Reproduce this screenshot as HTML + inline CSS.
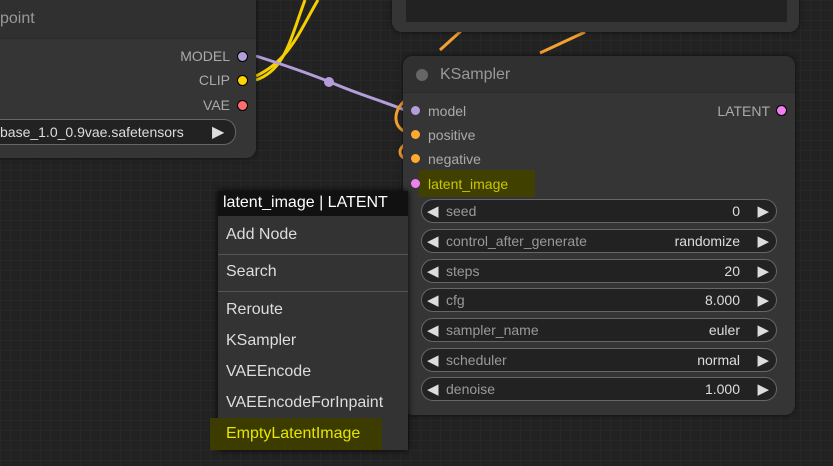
<!DOCTYPE html>
<html><head><style>
body{margin:0;width:833px;height:466px;overflow:hidden;background:#222;font-family:"Liberation Sans",sans-serif;position:relative;
background-image:linear-gradient(#282828 1px,transparent 1px),linear-gradient(90deg,#282828 1px,transparent 1px);background-size:10px 10px}
.node{position:absolute;background:#353535;border-radius:10px;box-shadow:0 0 6px rgba(0,0,0,.6)}
.title{position:absolute;left:0;right:0;top:0;height:36px;background:#303030;border-bottom:1px solid #2a2a2a;border-radius:10px 10px 0 0}
.t{position:absolute;font-size:14px;color:#aaa;white-space:nowrap}
.dot{position:absolute;width:9px;height:9px;border-radius:50%}
.w{position:absolute;left:18px;width:354px;height:22px;border:1px solid #666;border-radius:12px;background:#222;font-size:14px;color:#999}
.w .l{position:absolute;left:5px;top:2px;color:#ddd;font-size:15px}
.w .r{position:absolute;right:7px;top:2px;color:#ddd;font-size:15px}
.w .n{position:absolute;left:24px;top:3px}
.w .v{position:absolute;right:36px;top:3px;color:#ddd}
.menu{position:absolute;left:218px;top:191px;width:190px;height:259px;background:#333;box-shadow:0 0 6px #000}
.mi{position:absolute;left:8px;font-size:16px;color:#ddd}
.sep{position:absolute;left:0;right:0;height:1px;background:#555}
</style></head><body>
<svg style="position:absolute;left:0;top:0" width="833" height="466">
<path d="M256 80 C285 70 290 40 305 0" stroke="#f5d000" stroke-width="3" fill="none"/>
<path d="M256 76 C290 60 300 30 318 0" stroke="#f5d000" stroke-width="3" fill="none"/>
<path d="M256 56 C300 70 320 78 330 82 C360 95 380 100 410 112" stroke="#b39ddb" stroke-width="3" fill="none"/>
<circle cx="329" cy="82" r="5" fill="#b39ddb"/>
<path d="M440 50 L462 30" stroke="#f5a030" stroke-width="3" fill="none"/>
<path d="M540 53 L585 32" stroke="#f5a030" stroke-width="3" fill="none"/>
<path d="M406 100 C392 110 392 130 410 133" stroke="#f5a030" stroke-width="3" fill="none"/>
<path d="M404 145 C398 150 398 158 410 160" stroke="#f5a030" stroke-width="3" fill="none"/>
</svg>
<div class="node" style="left:-20px;top:-10px;width:276px;height:168px">
<div class="title" style="height:48px"></div>
<div class="t" style="left:20px;top:20px;font-size:16px;color:#999">point</div>
<div class="t" style="right:26px;top:58px">MODEL</div><div class="dot" style="right:8px;top:61px;background:#b39ddb;border:1px solid #000"></div>
<div class="t" style="right:26px;top:82px">CLIP</div><div class="dot" style="right:8px;top:85px;background:#ffd500;border:1px solid #000"></div>
<div class="t" style="right:26px;top:107px">VAE</div><div class="dot" style="right:8px;top:110px;background:#ff6e6e;border:1px solid #000"></div>
<div style="position:absolute;left:0;top:129px;width:254px;height:24px;border:1px solid #666;border-radius:12px;background:#222"></div>
<div class="t" style="left:20px;top:134px;color:#ddd">base_1.0_0.9vae.safetensors</div>
<div class="t" style="left:232px;top:132px;color:#ddd;font-size:16px">▶</div>
</div>
<div class="node" style="left:392px;top:-10px;width:407px;height:42px"><div style="position:absolute;left:14px;top:0;right:12px;bottom:10px;background:#222"></div></div>
<div class="node" style="left:403px;top:56px;width:392px;height:359px">
<div class="title"></div>
<div class="dot" style="left:13px;top:13px;width:12px;height:12px;background:#666"></div>
<div class="t" style="left:37px;top:10px;font-size:16px;color:#999">KSampler</div>
<div class="dot" style="left:8px;top:50px;background:#b39ddb"></div><div class="t" style="left:25px;top:47px">model</div>
<div class="t" style="right:25px;top:47px">LATENT</div><div class="dot" style="right:8px;top:49px;background:#f080f0;border:1px solid #000"></div>
<div class="dot" style="left:8px;top:74px;background:#ffa931"></div><div class="t" style="left:25px;top:71px">positive</div>
<div class="dot" style="left:8px;top:98px;background:#ffa931"></div><div class="t" style="left:25px;top:95px">negative</div>
<div style="position:absolute;left:16px;top:114px;width:116px;height:27px;background:#404000"></div>
<div class="dot" style="left:8px;top:123px;background:#f080f0"></div><div class="t" style="left:25px;top:120px;color:#c8c800">latent_image</div>
<div class="w" style="top:143px"><span class="l">◀</span><span class="n">seed</span><span class="v">0</span><span class="r">▶</span></div>
<div class="w" style="top:173px"><span class="l">◀</span><span class="n">control_after_generate</span><span class="v">randomize</span><span class="r">▶</span></div>
<div class="w" style="top:203px"><span class="l">◀</span><span class="n">steps</span><span class="v">20</span><span class="r">▶</span></div>
<div class="w" style="top:232px"><span class="l">◀</span><span class="n">cfg</span><span class="v">8.000</span><span class="r">▶</span></div>
<div class="w" style="top:262px"><span class="l">◀</span><span class="n">sampler_name</span><span class="v">euler</span><span class="r">▶</span></div>
<div class="w" style="top:292px"><span class="l">◀</span><span class="n">scheduler</span><span class="v">normal</span><span class="r">▶</span></div>
<div class="w" style="top:321px"><span class="l">◀</span><span class="n">denoise</span><span class="v">1.000</span><span class="r">▶</span></div>
</div>
<div class="menu">
<div style="position:absolute;left:0;top:0;width:190px;height:25px;background:#111"></div>
<div class="mi" style="top:3px;left:5px;color:#fff">latent_image | LATENT</div>
<div class="mi" style="top:35px">Add Node</div>
<div class="sep" style="top:63px"></div>
<div class="mi" style="top:72px">Search</div>
<div class="sep" style="top:100px"></div>
<div class="mi" style="top:110px">Reroute</div>
<div class="mi" style="top:141px">KSampler</div>
<div class="mi" style="top:172px">VAEEncode</div>
<div class="mi" style="top:203px">VAEEncodeForInpaint</div>
<div style="position:absolute;left:-8px;top:227px;width:172px;height:32px;background:#3c3c00"></div>
<div class="mi" style="top:234px;color:#e6e600">EmptyLatentImage</div>
</div>
</body></html>
